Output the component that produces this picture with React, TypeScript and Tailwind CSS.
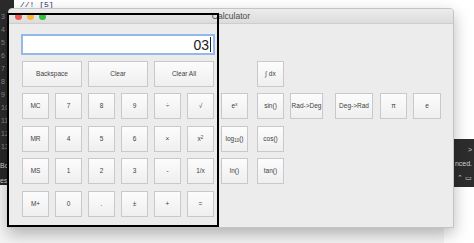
import React from 'react';

type BtnProps = { label: React.ReactNode; className?: string };

function Btn({ label, className = '' }: BtnProps) {
    return (
        <div
            className={`flex h-[26px] shrink-0 items-center justify-center whitespace-nowrap border border-[#c9c9c9] bg-gradient-to-b from-[#fcfcfc] to-[#efefef] text-[6.5px] font-medium text-[#3f3f3f] ${className}`}
        >
            {label}
        </div>
    );
}

const lineNumbers = ['3', '4', '5', '6', '7', '8', '9', '10', '11', '12', '13', '14', '15'];

export default function App() {
    return (
        <div className="relative h-[243px] w-[474px] overflow-hidden bg-[#f4f4f4] font-['Liberation_Sans',sans-serif]">
            {/* Editor behind */}
            <div className="absolute left-0 top-0 flex h-[10px] w-full bg-white">
                <div className="w-[14px] shrink-0 bg-[#2e2e2e]" />
                <span className="ml-[6px] font-['Liberation_Mono',monospace] text-[8px] leading-[9px] text-[#27346b]">//! [5]</span>
            </div>
            <div className="absolute left-0 top-0 flex h-[185px] w-[14px] flex-col items-start bg-[#2b2b2b] pl-[1px] pt-[10px]">
                {lineNumbers.map(n => (
                    <span key={n} className="h-[13px] text-[7px] leading-[13px] text-[#8a8a8a]">{n}</span>
                ))}
            </div>
            <div className="absolute left-0 top-[150px] flex h-[35px] w-[14px] flex-col bg-[#262626] pt-[8px] text-[7px] leading-[15px] text-[#cfcfcf]">
                <span>Bc</span>
                <span>es</span>
            </div>

            {/* Right panel behind */}
            <div className="absolute right-0 top-[0px] h-[139px] w-[30px] bg-white" />
            <div className="absolute right-0 top-[139px] flex h-[48px] w-[30px] flex-col items-end bg-[#2d2d2d] pr-[2px] pt-[4px] text-[7px] leading-[14px] text-[#d6d6d6]">
                <span>&gt;</span>
                <span>nced.</span>
                <span>⌃ ▭</span>
            </div>
            <div className="absolute right-0 top-[187px] h-[56px] w-[30px] bg-white" />

            {/* Calculator window */}
            <div className="absolute left-[8px] top-[8px] flex h-[220px] w-[446px] flex-col overflow-hidden rounded-t-[4px] border border-[#c4c4c4] bg-[#ececec] shadow-[0_6px_16px_rgba(0,0,0,0.28)]">
                {/* Title bar */}
                <div className="relative flex h-[15px] shrink-0 items-center border-b border-[#cdcdcd] bg-gradient-to-b from-[#ececec] to-[#dcdcdc]">
                    <div className="ml-[6px] flex gap-[5px]">
                        <span className="h-[7px] w-[7px] rounded-full bg-[#f0554f]" />
                        <span className="h-[7px] w-[7px] rounded-full bg-[#f8b534]" />
                        <span className="h-[7px] w-[7px] rounded-full bg-[#2fc041]" />
                    </div>
                    <span className="absolute inset-x-0 text-center text-[8.5px] leading-[15px] text-[#4a4a4a]">Calculator</span>
                </div>

                {/* Display */}
                <div className="ml-[12px] mt-[10px] flex h-[21px] w-[194px] items-center justify-end border-2 border-[#93b9ea] bg-white pr-[2px]">
                    <span className="text-[14px] leading-none text-[#1a1a1a]">03</span>
                    <span className="ml-[1px] h-[15px] w-px bg-[#222]" />
                </div>

                {/* Row 1 */}
                <div className="mt-[6px] flex">
                    <Btn label="Backspace" className="ml-[13px] w-[60px]" />
                    <Btn label="Clear" className="ml-[6px] w-[60px]" />
                    <Btn label="Clear All" className="ml-[6px] w-[60px]" />
                    <Btn label="∫ dx" className="ml-[43px] w-[27px]" />
                </div>

                {/* Row 2 */}
                <div className="mt-[6px] flex">
                    <Btn label="MC" className="ml-[13px] w-[27px]" />
                    <Btn label="7" className="ml-[6px] w-[27px]" />
                    <Btn label="8" className="ml-[6px] w-[27px]" />
                    <Btn label="9" className="ml-[6px] w-[27px]" />
                    <Btn label="÷" className="ml-[6px] w-[27px]" />
                    <Btn label="√" className="ml-[6px] w-[27px]" />
                    <Btn label={<span>e<sup className="text-[4.5px]">x</sup></span>} className="ml-[7px] w-[27px]" />
                    <Btn label="sin()" className="ml-[9px] w-[27px]" />
                    <Btn label="Rad->Deg" className="ml-[6px] w-[33px]" />
                    <Btn label="Deg->Rad" className="ml-[12px] w-[38px]" />
                    <Btn label="π" className="ml-[7px] w-[27px]" />
                    <Btn label="e" className="ml-[6px] w-[28px] text-[5px]" />
                </div>

                {/* Row 3 */}
                <div className="mt-[7px] flex">
                    <Btn label="MR" className="ml-[13px] w-[27px]" />
                    <Btn label="4" className="ml-[6px] w-[27px]" />
                    <Btn label="5" className="ml-[6px] w-[27px]" />
                    <Btn label="6" className="ml-[6px] w-[27px]" />
                    <Btn label="×" className="ml-[6px] w-[27px]" />
                    <Btn label={<span>x<sup className="text-[4.5px]">2</sup></span>} className="ml-[6px] w-[27px]" />
                    <Btn label={<span>log<sub className="text-[4.5px]">10</sub>()</span>} className="ml-[7px] w-[27px]" />
                    <Btn label="cos()" className="ml-[9px] w-[27px]" />
                </div>

                {/* Row 4 */}
                <div className="mt-[6px] flex">
                    <Btn label="MS" className="ml-[13px] w-[27px]" />
                    <Btn label="1" className="ml-[6px] w-[27px]" />
                    <Btn label="2" className="ml-[6px] w-[27px]" />
                    <Btn label="3" className="ml-[6px] w-[27px]" />
                    <Btn label="-" className="ml-[6px] w-[27px]" />
                    <Btn label="1/x" className="ml-[6px] w-[27px]" />
                    <Btn label="ln()" className="ml-[7px] w-[27px]" />
                    <Btn label="tan()" className="ml-[9px] w-[27px]" />
                </div>

                {/* Row 5 */}
                <div className="mt-[7px] flex">
                    <Btn label="M+" className="ml-[13px] w-[27px]" />
                    <Btn label="0" className="ml-[6px] w-[27px]" />
                    <Btn label="." className="ml-[6px] w-[27px]" />
                    <Btn label="±" className="ml-[6px] w-[27px]" />
                    <Btn label="+" className="ml-[6px] w-[27px]" />
                    <Btn label="=" className="ml-[6px] w-[27px]" />
                </div>
            </div>

            {/* Annotation outline */}
            <div className="pointer-events-none absolute left-[7px] top-[13px] h-[214px] w-[212px] border-2 border-black" />
        </div>
    );
}
